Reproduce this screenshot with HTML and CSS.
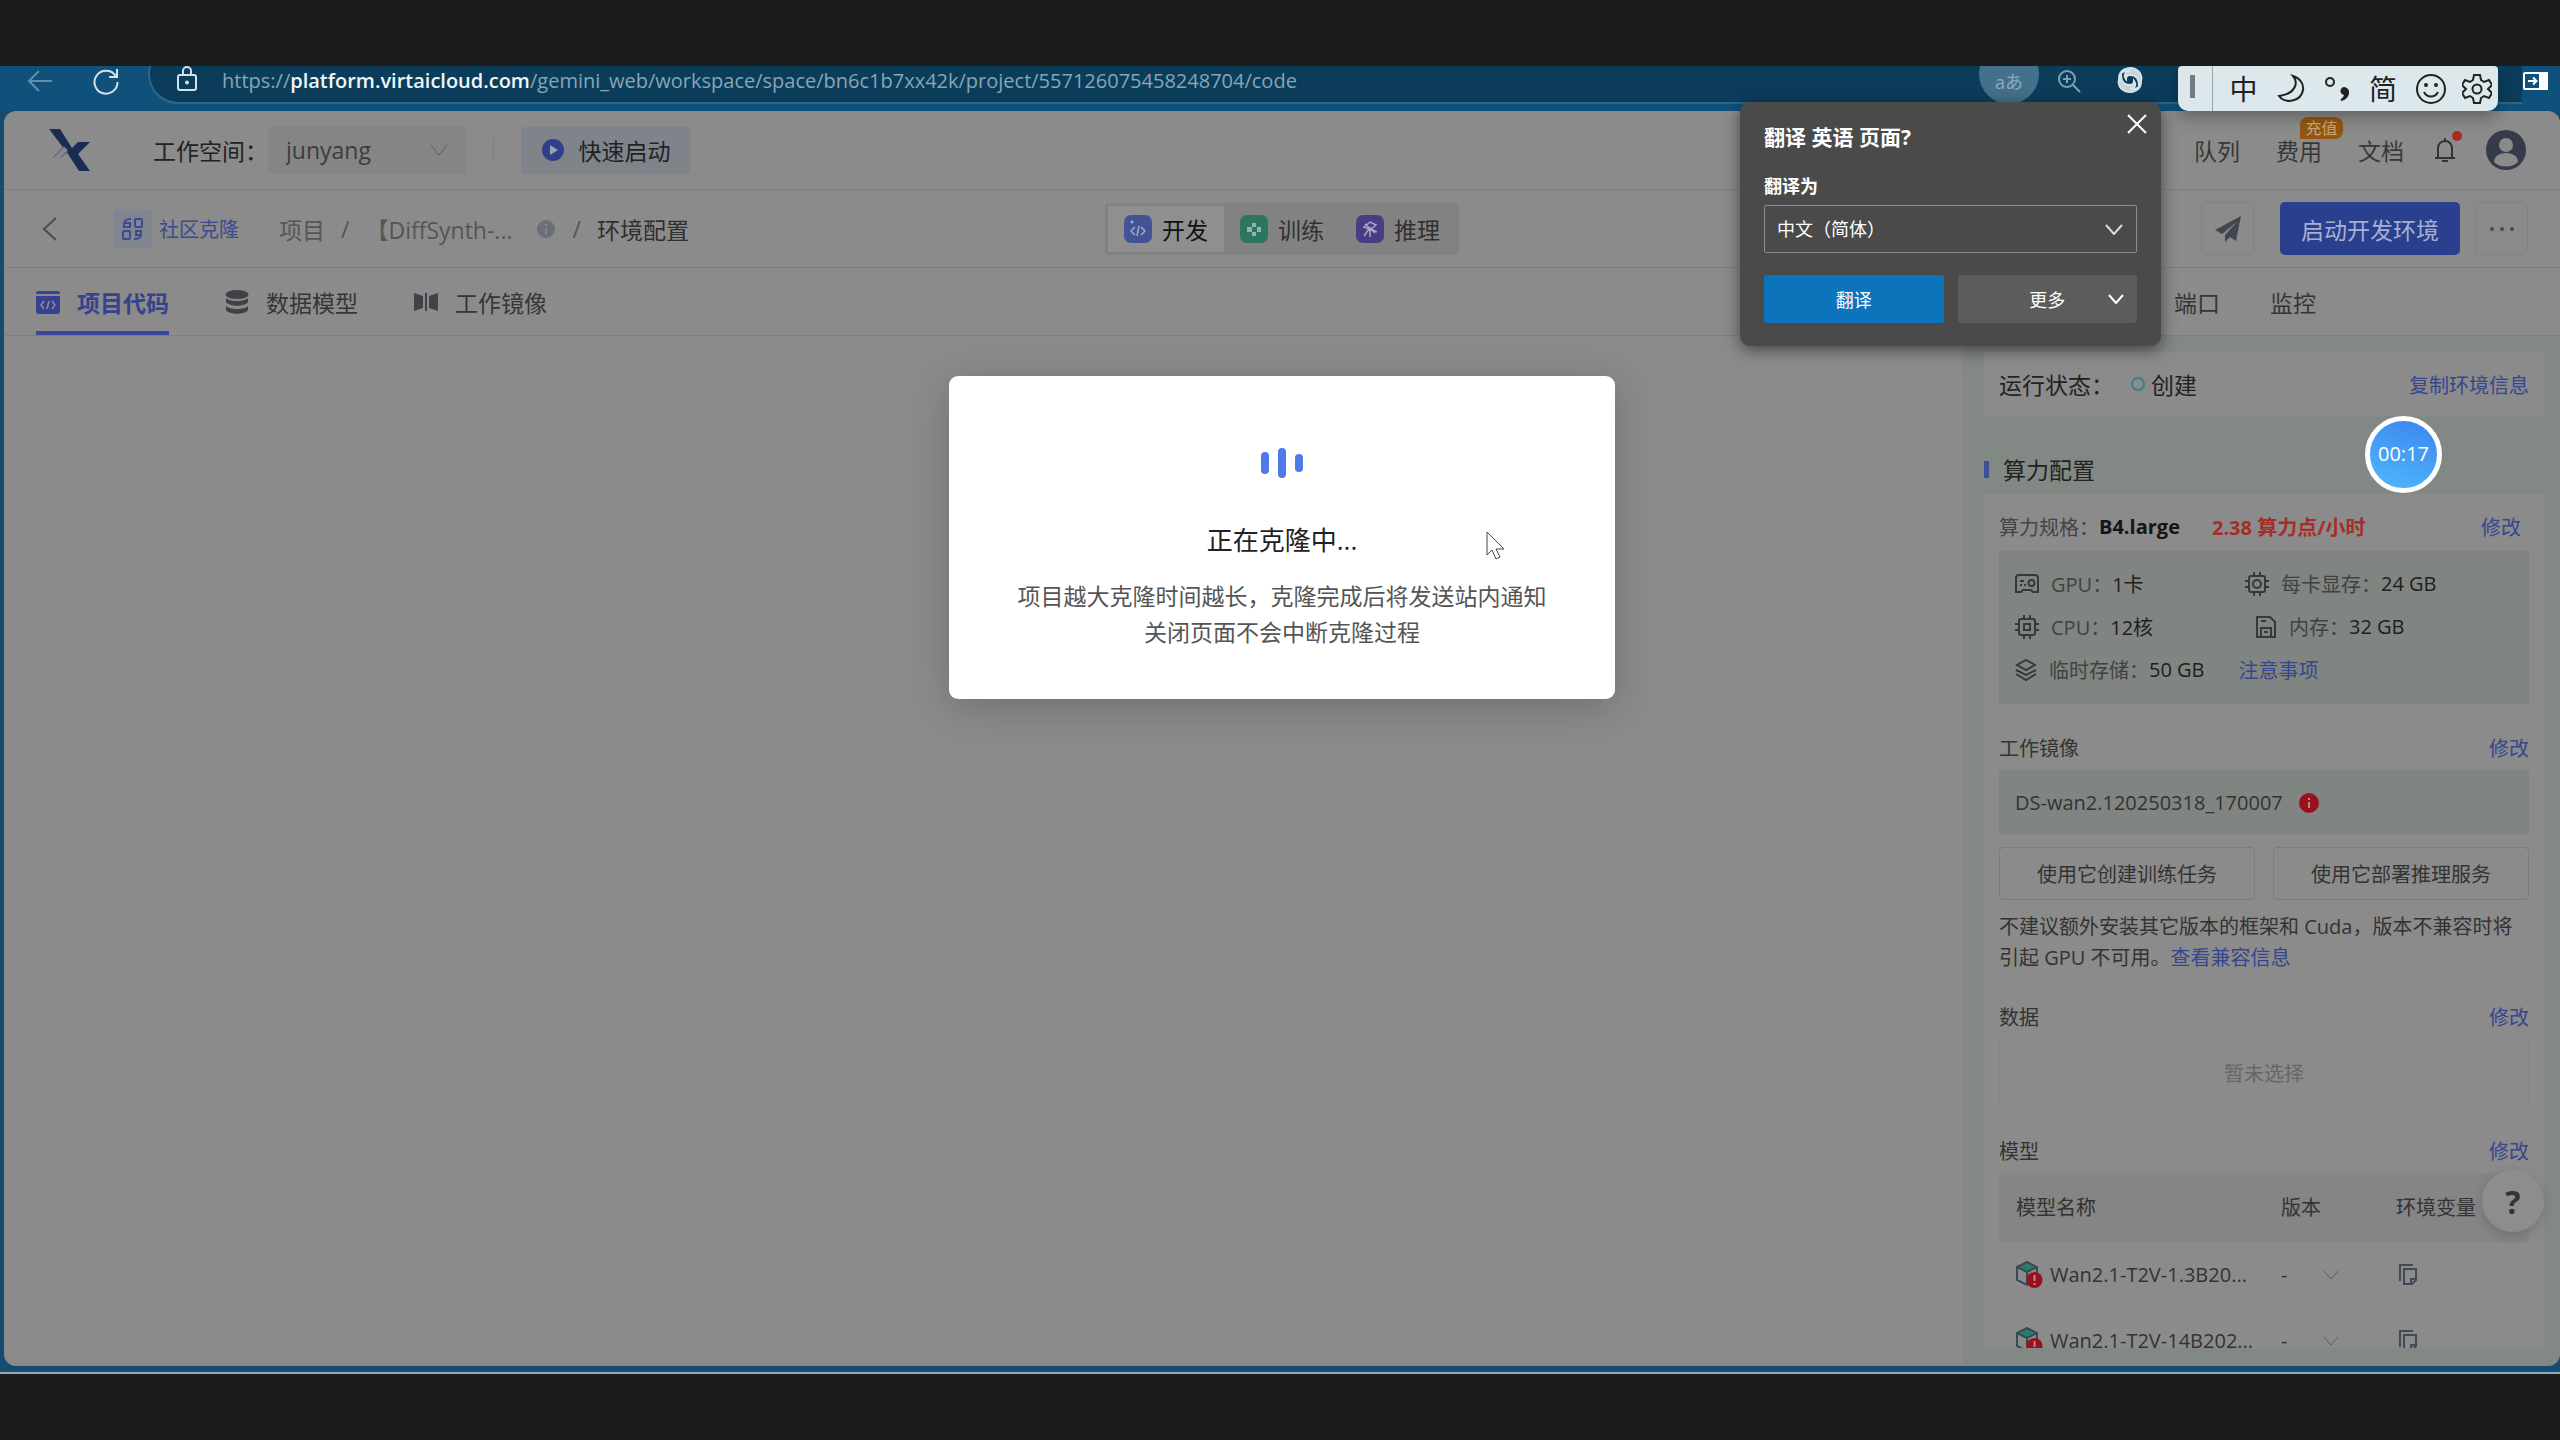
FILE: index.html
```html
<!DOCTYPE html>
<html lang="zh">
<head>
    <meta charset="UTF-8">
    <meta name="viewport" content="width=device-width, initial-scale=1.0">
    <title>环境配置</title>
    <link rel="stylesheet" href="styles.css">
</head>
<body>
    <!-- 浏览器地址栏 -->
    <div class="browser-bar">
        <button class="bar-button back" aria-label="后退">
            <svg width="28" height="28" viewBox="0 0 28 28"><path d="M26 14H3M13 4L3 14l10 10"/></svg>
        </button>
        <button class="bar-button" aria-label="刷新">
            <svg width="28" height="28" viewBox="0 0 28 28"><path d="M24 9.500A11.500 11.500 0 1 0 25.500 15M25 2v8h-8"/></svg>
        </button>
        <div class="address">
            <svg width="22" height="26" viewBox="0 0 22 26"><rect x="2" y="9" width="18" height="15" rx="2"/><path d="M7 9V5a4 4 0 0 1 8 0v4"/><circle cx="11" cy="16.500" r="1"/></svg>
            <div class="url">https://<b>platform.virtaicloud.com</b>/gemini_web/workspace/space/bn6c1b7xx42k/project/557126075458248704/code</div>
            <button class="translate-icon" aria-label="翻译此页">aあ</button>
            <button class="bar-button zoom" aria-label="缩放">
                <svg width="24" height="24" viewBox="0 0 24 24"><circle cx="10" cy="10" r="8"/><path d="M16 16l7 7M6 10h8M10 6v8"/></svg>
            </button>
            <svg class="swirl" width="28" height="28" viewBox="0 0 28 28">
                <path d="M3 12C3 4 12 0 19 3c7 3 8 11 4 16 0-6-3-10-9-10-3 0-4 2-4 4-3-4 0-8 4-8-6-1-10 2-11 7z" fill="#c3d6df"/>
                <path d="M25 16c0 8-9 12-16 9-7-3-8-11-4-16 0 6 3 10 9 10 3 0 4-2 4-4 3 4 0 8-4 8 6 1 10-2 11-7z" fill="#c3d6df"/>
            </svg>
        </div>
        <button class="bar-button side" aria-label="侧边栏">
            <svg width="26" height="20" viewBox="0 0 26 20"><rect x="1" y="2" width="23" height="16" rx="1"/><path d="M17 2h7v16h-7z" fill="#fff"/><path d="M5 10h8M10 6.500l3.500 3.500-3.500 3.500"/></svg>
        </button>
    </div>

    <div class="page">
        <!-- 顶部导航 -->
        <div class="header">
            <svg class="logo" width="44" height="44" viewBox="0 0 44 44">
                <path d="M1 1h11l12 19 6-6h12L30 26l12 17H31L20 26z" fill="#1a2c52"/>
                <path d="M4 30l12-12 4 6-7 6z" fill="#5f6879"/>
                <path d="M6 31l11-11M9 31l10-10" stroke="#8b8b8b"/>
            </svg>
            <label class="space-label" for="space">工作空间：</label>
            <div class="select-wrap space-select">
                <select id="space"><option>junyang</option></select>
                <svg width="18" height="12" viewBox="0 0 18 12"><path d="M1 1l8 10 8-10"/></svg>
            </div>
            <div class="divider"></div>
            <button class="quick-start">
                <svg width="24" height="24" viewBox="0 0 24 24"><circle cx="12" cy="12" r="11" fill="#313f88"/><path d="M9 7l8 5-8 5z" fill="#98a0b5"/></svg>
                快速启动
            </button>
            <div class="header-links">
                <a href="#">队列</a>
                <a href="#" class="cost">费用<span class="badge">充值</span></a>
                <a href="#">文档</a>
                <button class="bell" aria-label="通知">
                    <svg width="22" height="26" viewBox="0 0 22 26"><path d="M1 21h20M4 21V11a7 7 0 0 1 14 0v10M11 4V1M8 24h6"/></svg>
                    <span class="red-dot"></span>
                </button>
                <button class="avatar" aria-label="用户">
                    <svg width="40" height="40" viewBox="0 0 40 40"><circle cx="20" cy="20" r="20" fill="#363b4a"/><circle cx="20" cy="15" r="7" fill="#8b8b8b"/><path d="M8 32c0-12 24-12 24 0-6 6-18 6-24 0z" fill="#8b8b8b"/></svg>
                </button>
            </div>
        </div>

        <!-- 面包屑和操作 -->
        <div class="sub-header">
            <button class="back-button" aria-label="返回">
                <svg width="16" height="24" viewBox="0 0 16 24"><path d="M14 1L2 12l12 11"/></svg>
            </button>
            <span class="clone-icon">
                <svg width="24" height="24" viewBox="0 0 24 24"><rect x="14" y="2" width="7" height="8" rx="1"/><rect x="2" y="14" width="7" height="8" rx="1"/><path d="M10 2C5 2 3 4 3 7v3h6V6H4M13 22c5 0 7-2 7-5v-3h-5v4h5"/></svg>
            </span>
            <span class="clone-text">社区克隆</span>
            <div class="breadcrumb">
                <a href="#">项目</a>
                <span>/</span>
                <a href="#">【DiffSynth-...</a>
                <svg width="20" height="20" viewBox="0 0 20 20"><circle cx="10" cy="10" r="9" fill="#6b6f77"/><path d="M10 5v2M10 9v6" stroke="#858585" stroke-width="2"/></svg>
                <span>/</span>
                <span class="current">环境配置</span>
            </div>
            <div class="modes">
                <button class="mode active">
                    <svg width="28" height="28" viewBox="0 0 28 28"><rect width="28" height="28" rx="7" fill="#445395"/><path d="M11 12l-4 4 4 4M17 12l4 4-4 4M15 11l-2 10" fill="none" stroke="#a2abc9" stroke-width="1.500"/><circle cx="8" cy="7" r="1.500" fill="#a2abc9"/></svg>
                    开发
                </button>
                <button class="mode">
                    <svg width="28" height="28" viewBox="0 0 28 28"><rect width="28" height="28" rx="7" fill="#2b7561"/><path d="M12 8h4v4h-4zM12 17h4v4h-4zM7 12h5v5H7zM17 12h4v5h-4z" fill="#94b3a9"/></svg>
                    训练
                </button>
                <button class="mode">
                    <svg width="28" height="28" viewBox="0 0 28 28"><rect width="28" height="28" rx="7" fill="#493c86"/><path d="M14 7l-6 5 5 2-5 7M14 7l6 3-5 4 6 3M14 12v10M9 9l10 9" fill="none" stroke="#aaa4c6" stroke-width="1.500"/></svg>
                    推理
                </button>
            </div>
            <div class="actions">
                <button class="icon-button" aria-label="分享">
                    <svg width="30" height="30" viewBox="0 0 30 30"><path d="M28 2L2 16l7 4L24 8 12 21v7l5-5 6 4z" fill="#42464f"/></svg>
                </button>
                <button class="primary-button">启动开发环境</button>
                <button class="icon-button" aria-label="更多操作">
                    <svg width="26" height="6" viewBox="0 0 26 6"><g fill="#4a4a4a"><circle cx="3" cy="3" r="2"/><circle cx="13" cy="3" r="2"/><circle cx="23" cy="3" r="2"/></g></svg>
                </button>
            </div>
        </div>

        <!-- 标签栏 -->
        <div class="tabs">
            <button class="tab active">
                <svg width="24" height="24" viewBox="0 0 24 24"><path d="M0 4a3 3 0 0 1 3-3h18a3 3 0 0 1 3 3zM0 6h24v15a3 3 0 0 1-3 3H3a3 3 0 0 1-3-3z" fill="#34428f"/><path d="M8 11l-3 4 3 4M16 11l3 4-3 4M13 11l-2 8" fill="none" stroke="#8b8b9b" stroke-width="1.500"/></svg>
                项目代码
            </button>
            <button class="tab">
                <svg width="24" height="24" viewBox="0 0 24 24"><g fill="#3f4247"><ellipse cx="12" cy="4.500" rx="11.500" ry="4.500"/><path d="M1 8c3 4 19 4 22 0v4c-3 5-19 5-22 0zM1 16c3 4 19 4 22 0v4c-3 5-19 5-22 0z"/></g></svg>
                数据模型
            </button>
            <button class="tab">
                <svg width="24" height="24" viewBox="0 0 24 24"><path d="M0 3l9 3v12l-9 3zM11 3h2v18h-2zM24 3l-9 3v12l9 3z" fill="#3f4247"/></svg>
                工作镜像
            </button>
            <div class="side-tabs">
                <button class="tab">端口</button>
                <button class="tab">监控</button>
            </div>
        </div>

        <div class="content">
            <div class="workspace"></div>
            <div class="sidebar">
                <div class="card status">
                    <span>运行状态：</span>
                    <span class="state-dot"></span>
                    <span>创建</span>
                    <a href="#" class="link">复制环境信息</a>
                </div>
                <div class="side-title">算力配置</div>
                <div class="card config">
                    <div class="spec-row">
                        <span>算力规格：</span>
                        <b>B4.large</b>
                        <b class="price">2.38 算力点/小时</b>
                        <a href="#" class="link">修改</a>
                    </div>
                    <div class="spec-box">
                        <div class="spec-line">
                            <div class="spec wide">
                                <svg width="24" height="22" viewBox="0 0 24 22"><path d="M4 2h16a3 3 0 0 1 3 3v14h-5l-2-2H8l-2 2H1V5a3 3 0 0 1 3-3zM5 8h4M5 12h2M9 12h2"/><circle cx="16.500" cy="10" r="3"/></svg>
                                <span>GPU：</span><em>1卡</em>
                            </div>
                            <div class="spec">
                                <svg width="24" height="24" viewBox="0 0 24 24"><rect x="4" y="4" width="16" height="16" rx="2"/><circle cx="12" cy="12" r="4"/><path d="M9 0v4M15 0v4M9 20v4M15 20v4M0 9h4M0 15h4M20 9h4M20 15h4"/></svg>
                                <span>每卡显存：</span><em>24 GB</em>
                            </div>
                        </div>
                        <div class="spec-line">
                            <div class="spec wide cpu">
                                <svg width="24" height="24" viewBox="0 0 24 24"><rect x="4" y="4" width="16" height="16" rx="2"/><rect x="9" y="9" width="6" height="6"/><path d="M9 0v4M15 0v4M9 20v4M15 20v4M0 9h4M0 15h4M20 9h4M20 15h4"/></svg>
                                <span>CPU：</span><em>12核</em>
                            </div>
                            <div class="spec">
                                <svg width="22" height="22" viewBox="0 0 22 22"><path d="M2 1h13l5 5v15H2zM6 21v-9h10v9M6 5h5M9 16h4"/></svg>
                                <span>内存：</span><em>32 GB</em>
                            </div>
                        </div>
                        <div class="spec-line">
                            <div class="spec">
                                <svg width="22" height="22" viewBox="0 0 22 22"><path d="M11 1l9 5-9 5-9-5zM1 11l10 5 10-5M1 15l10 6 10-6"/></svg>
                                <span>临时存储：</span><em>50 GB</em>
                            </div>
                            <a href="#" class="link">注意事项</a>
                        </div>
                    </div>

                    <div class="section-title"><span>工作镜像</span><a href="#" class="link">修改</a></div>
                    <div class="image-box">
                        DS-wan2.120250318_170007
                        <svg width="20" height="20" viewBox="0 0 20 20"><circle cx="10" cy="10" r="10" fill="#99111f"/><path d="M10 5v2M10 9v6" stroke="#b9868b" stroke-width="2"/></svg>
                    </div>
                    <div class="image-buttons">
                        <button>使用它创建训练任务</button>
                        <button>使用它部署推理服务</button>
                    </div>
                    <div class="note">不建议额外安装其它版本的框架和 Cuda，版本不兼容时将引起 GPU 不可用。<a href="#" class="link">查看兼容信息</a></div>

                    <div class="section-title"><span>数据</span><a href="#" class="link">修改</a></div>
                    <div class="empty">暂未选择</div>

                    <div class="section-title"><span>模型</span><a href="#" class="link">修改</a></div>
                    <table class="models">
                        <thead>
                            <tr><th class="col-name">模型名称</th><th class="col-version">版本</th><th>环境变量</th></tr>
                        </thead>
                        <tbody>
                            <tr>
                                <td>
                                    <div class="model-name">
                                        <svg width="27" height="28" viewBox="0 0 27 28"><path d="M1 6l10-5 10 5-10 5z" fill="#2f7a66"/><path d="M1 6l10-5 10 5v13l-10 5-10-5zM1 6l10 5v13M11 11l10-5" fill="none" stroke="#344a56"/><circle cx="18.500" cy="19" r="8" fill="#99111f"/><path d="M18.500 14v6M18.500 22v2" stroke="#b9868b" stroke-width="2"/></svg>
                                        Wan2.1-T2V-1.3B20...
                                    </div>
                                </td>
                                <td>
                                    <div class="select-wrap version">
                                        <select aria-label="版本"><option>-</option></select>
                                        <svg width="16" height="10" viewBox="0 0 16 10"><path d="M1 1l7 8 7-8"/></svg>
                                    </div>
                                </td>
                                <td>
                                    <button class="copy" aria-label="复制">
                                        <svg width="20" height="22" viewBox="0 0 20 22"><path d="M5 5h12v11l-4 4H5zM17 15h-5v5M1 17V1h13"/></svg>
                                    </button>
                                </td>
                            </tr>
                            <tr>
                                <td>
                                    <div class="model-name">
                                        <svg width="27" height="28" viewBox="0 0 27 28"><path d="M1 6l10-5 10 5-10 5z" fill="#2f7a66"/><path d="M1 6l10-5 10 5v13l-10 5-10-5zM1 6l10 5v13M11 11l10-5" fill="none" stroke="#344a56"/><circle cx="18.500" cy="19" r="8" fill="#99111f"/><path d="M18.500 14v6M18.500 22v2" stroke="#b9868b" stroke-width="2"/></svg>
                                        Wan2.1-T2V-14B202...
                                    </div>
                                </td>
                                <td>
                                    <div class="select-wrap version">
                                        <select aria-label="版本"><option>-</option></select>
                                        <svg width="16" height="10" viewBox="0 0 16 10"><path d="M1 1l7 8 7-8"/></svg>
                                    </div>
                                </td>
                                <td>
                                    <button class="copy" aria-label="复制">
                                        <svg width="20" height="22" viewBox="0 0 20 22"><path d="M5 5h12v11l-4 4H5zM17 15h-5v5M1 17V1h13"/></svg>
                                    </button>
                                </td>
                            </tr>
                        </tbody>
                    </table>
                </div>
            </div>
        </div>

        <!-- 克隆进度弹窗 -->
        <div class="modal">
            <svg width="42" height="30" viewBox="0 0 42 30"><g fill="#4f78e8"><rect y="4" width="8" height="22" rx="4"/><rect x="17" width="8" height="30" rx="4"/><rect x="34" y="6" width="8" height="18" rx="4"/></g></svg>
            <h3>正在克隆中...</h3>
            <p>项目越大克隆时间越长，克隆完成后将发送站内通知<br>关闭页面不会中断克隆过程</p>
        </div>

        <button class="help" aria-label="帮助">?</button>
        <div class="timer">00:17</div>
        <svg class="cursor" width="20" height="30" viewBox="0 0 20 30"><path d="M1 1v23l5-5 4 9 4-2-4-8h8z" fill="#fff" stroke="#444" stroke-width="1"/></svg>
    </div>

    <!-- 翻译提示 -->
    <div class="translate">
        <button class="close" aria-label="关闭">
            <svg width="20" height="20" viewBox="0 0 20 20"><path d="M1 1l18 18M19 1L1 19"/></svg>
        </button>
        <div class="translate-title">翻译 英语 页面?</div>
        <label for="lang">翻译为</label>
        <div class="select-wrap lang">
            <select id="lang"><option>中文（简体）</option></select>
            <svg width="18" height="11" viewBox="0 0 18 11"><path d="M1 1l8 9 8-9"/></svg>
        </div>
        <div class="translate-buttons">
            <button class="do-translate">翻译</button>
            <button class="more">更多
                <svg width="16" height="10" viewBox="0 0 16 10"><path d="M1 1l7 8 7-8"/></svg>
            </button>
        </div>
    </div>

    <!-- 输入法工具条 -->
    <div class="ime">
        <span class="handle"></span>
        <span class="ime-item">中</span>
        <svg class="ime-item" width="30" height="30" viewBox="0 0 30 30"><path d="M17 2c6 7 2 18-14 20 6 8 22 6 24-6 1-6-3-12-10-14z"/></svg>
        <svg class="ime-item" width="30" height="30" viewBox="0 0 30 30"><circle cx="7" cy="8" r="4"/><path d="M21 14a3 3 0 1 0 1 6c0 3-2 5-4 6 5-1 8-5 7-9-1-2-2-3-4-3z" fill="#222"/></svg>
        <span class="ime-item">简</span>
        <svg class="ime-item" width="30" height="30" viewBox="0 0 30 30"><circle cx="15" cy="15" r="14"/><path d="M8 18c3 6 11 6 14 0"/><circle cx="10" cy="11" r="1" fill="#222"/><circle cx="20" cy="11" r="1" fill="#222"/></svg>
        <svg class="ime-item" width="30" height="30" viewBox="0 0 30 30"><path d="M12 1h6l1 5 3 2 5-2 3 5-4 4 4 4-3 5-5-2-3 2-1 5h-6l-1-5-3-2-5 2-3-5 4-4-4-4 3-5 5 2 3-2z"/><circle cx="15" cy="15" r="4.500"/></svg>
    </div>
</body>
</html>
```

FILE: styles.css
```css
* {
    box-sizing: border-box;
}

body {
    font-family: "Open Sans", "Noto Sans CJK SC", sans-serif;
    font-size: 20px;
    margin: 0;
    padding: 66px 0;
    height: 100vh;
    background-color: #1a1d1c;
    color: #333;
    display: flex;
    flex-direction: column;
    position: relative;
    overflow: hidden;
}

button, select {
    font: inherit;
    color: inherit;
    background: none;
    border: none;
    padding: 0;
    margin: 0;
    cursor: pointer;
}

a {
    color: inherit;
    text-decoration: none;
}

svg {
    flex: none;
    fill: none;
    stroke-width: 2;
}

.link {
    color: #36468f;
}

/* 地址栏 */
.browser-bar {
    height: 45px;
    flex: none;
    display: flex;
    padding-left: 26px;
    padding-right: 10px;
    background-color: #10517b;
    overflow: hidden;
}

.bar-button {
    height: 30px;
    width: 28px;
    margin-right: 38px;
    stroke: #d3e2eb;
    display: flex;
    align-items: center;
    justify-content: center;
}

    .bar-button.back {
        stroke: #5f8fae;
    }

    .bar-button.zoom {
        stroke: #7fa0b3;
        margin: 0 33px 0 16px;
    }

    .bar-button.side {
        stroke: #fff;
        margin: 0;
    }

.address {
    flex: 1;
    height: 60px;
    margin-top: -22px;
    margin-left: -10px;
    padding: 20px 0 0 26px;
    display: flex;
    background-color: #0b3d5b;
    border: 2px solid #2c6788;
    border-right: none;
    border-radius: 30px 0 0 30px;
    stroke: #d3e2eb;
}

.url {
    flex: 1;
    margin-left: 24px;
    font-size: 20px;
    line-height: 30px;
    color: #86a5b8;
    white-space: nowrap;
}

    .url b {
        font-weight: 600;
        color: #eef5f9;
    }

.translate-icon {
    width: 60px;
    height: 60px;
    margin-top: -22px;
    padding-top: 14px;
    border-radius: 50%;
    background-color: #44708c;
    color: #8cabbd;
    font-size: 18px;
}

.swirl {
    margin-right: 378px;
}

/* 页面 */
.page {
    flex: 1;
    min-height: 0;
    margin-left: 4px;
    display: flex;
    flex-direction: column;
    position: relative;
    background-color: #8b8b8b;
    border-radius: 12px;
    box-shadow: 0 0 0 30px #174c70;
    clip-path: inset(0 0 -8px -4px);
    border-bottom: 1px solid #72899a;
}

body::after {
    content: "";
    height: 2px;
    margin-top: 6px;
    background-color: #8fa9bb;
    z-index: 2;
}

.header, .sub-header, .tabs {
    flex: none;
    display: flex;
    align-items: center;
    border-bottom: 1px solid #7f7f7f;
    font-size: 23px;
}

.header {
    height: 79px;
    padding: 0 34px 0 44px;
    color: #222;
}

.space-label {
    margin-left: 61px;
}

.select-wrap {
    position: relative;
    display: flex;
    align-items: center;
    stroke: #5f5f5f;
}

    .select-wrap select {
        appearance: none;
        width: 100%;
        height: 100%;
    }

    .select-wrap svg {
        position: absolute;
        right: 18px;
        stroke-width: 1;
        pointer-events: none;
    }

.space-select {
    width: 198px;
    height: 48px;
    background-color: #858585;
    border-radius: 4px;
    color: #3c3c3c;
}

    .space-select select {
        padding-left: 18px;
    }

.divider {
    width: 1px;
    height: 24px;
    margin: 0 27px;
    background-color: #808080;
}

.quick-start {
    width: 169px;
    height: 47px;
    display: flex;
    align-items: center;
    justify-content: center;
    gap: 14px;
    background-color: #7f848b;
    border-radius: 4px;
}

.header-links {
    margin-left: auto;
    display: flex;
    align-items: center;
    gap: 36px;
    color: #383838;
}

.cost {
    position: relative;
}

.badge {
    position: absolute;
    left: 24px;
    top: -16px;
    width: 43px;
    height: 22px;
    line-height: 22px;
    text-align: center;
    font-size: 16px;
    color: #c9a77c;
    background-color: #935711;
    border-radius: 8px 8px 8px 0;
}

.bell {
    position: relative;
    display: flex;
    margin-left: -6px;
    stroke: #333;
}

.red-dot {
    position: absolute;
    right: -6px;
    top: -6px;
    width: 10px;
    height: 10px;
    border-radius: 50%;
    background-color: #a92b20;
}

.avatar {
    display: flex;
    margin-left: -6px;
}

/* 面包屑 */
.sub-header {
    height: 78px;
    padding: 0 32px 0 38px;
    position: relative;
}

.back-button {
    display: flex;
    stroke: #4d4d4d;
}

.clone-icon {
    width: 39px;
    height: 39px;
    margin-left: 55px;
    display: flex;
    align-items: center;
    justify-content: center;
    background-color: #80858f;
    border-radius: 4px;
    stroke: #3c4a92;
}

.clone-text {
    margin-left: 7px;
    font-size: 20px;
    color: #3c4a92;
}

.breadcrumb {
    margin-left: 40px;
    display: flex;
    align-items: center;
    gap: 16px;
    color: #555;
}

    .breadcrumb svg {
        margin-left: 8px;
    }

    .breadcrumb .current {
        color: #303030;
    }

/* 模式切换浮在行中间 */
.modes {
    position: absolute;
    left: 50%;
    transform: translateX(-50%);
    display: flex;
    padding: 3px;
    background-color: #828282;
    border-radius: 4px;
}

.mode {
    width: 116px;
    height: 46px;
    display: flex;
    align-items: center;
    justify-content: center;
    gap: 10px;
    color: #303030;
}

    .mode.active {
        background-color: #8f8f8f;
        color: #111;
    }

.actions {
    margin-left: auto;
    display: flex;
    align-items: center;
}

.icon-button {
    width: 53px;
    height: 53px;
    display: flex;
    align-items: center;
    justify-content: center;
    border: 1px solid #828282;
    border-radius: 6px;
}

.primary-button {
    width: 180px;
    height: 53px;
    margin: 0 15px 0 26px;
    background-color: #2b3f8f;
    border-radius: 5px;
    color: #a6afd0;
}

/* 标签 */
.tabs {
    height: 68px;
    padding: 0 244px 0 32px;
    gap: 56px;
}

.tab {
    height: 67px;
    display: flex;
    align-items: center;
    gap: 17px;
    color: #363636;
}

    .tab.active {
        color: #34428f;
        font-weight: bold;
        border-bottom: 4px solid #3b479a;
        border-top: 4px solid transparent;
    }

.side-tabs {
    margin-left: auto;
    display: flex;
    gap: 50px;
}

.content {
    flex: 1;
    min-height: 0;
    display: flex;
}

.workspace {
    flex: 1;
}

/* 右侧栏 */
.sidebar {
    width: 597px;
    padding: 16px 16px 17px 19px;
    display: flex;
    flex-direction: column;
    background-color: #828884;
    border-left: 2px solid #868686;
    border-radius: 0 0 12px 0;
}

.card {
    background-color: #8b8b8b;
    padding: 0 15px;
}

.status {
    height: 64px;
    flex: none;
    display: flex;
    align-items: center;
    font-size: 23px;
    color: #222;
}

    .status .link {
        margin-left: auto;
        font-size: 20px;
    }

.state-dot {
    width: 14px;
    height: 14px;
    margin: 0 6px 0 17px;
    border: 2px solid #3b7f83;
    border-radius: 50%;
}

.side-title {
    height: 78px;
    flex: none;
    padding-top: 28px;
    display: flex;
    align-items: center;
    gap: 14px;
    font-size: 23px;
    color: #222;
}

    .side-title::before {
        content: "";
        width: 5px;
        height: 17px;
        background-color: #3e4f9c;
    }

.config {
    flex: 1;
    min-height: 0;
    overflow: hidden;
}

.spec-row {
    height: 57px;
    padding: 8px 8px 0 0;
    display: flex;
    align-items: center;
    color: #444;
}

    .spec-row b {
        color: #151515;
    }

    .spec-row .price {
        margin-left: 32px;
        color: #a32e2a;
    }

    .spec-row .link {
        margin-left: auto;
    }

.spec-box {
    height: 153px;
    padding: 11px 16px;
    background-color: #808582;
    color: #3e4341;
}

.spec-line {
    height: 43px;
    display: flex;
    align-items: center;
    stroke: #343a37;
}

    .spec-line .link {
        margin-left: 34px;
    }

.spec {
    display: flex;
    align-items: center;
    gap: 12px;
}

    .spec em {
        font-style: normal;
        color: #1d201f;
        margin-left: -12px;
    }

    .spec.wide {
        width: 230px;
    }

    .spec.cpu {
        width: 240px;
    }

.section-title {
    height: 66px;
    padding-top: 20px;
    display: flex;
    align-items: center;
    justify-content: space-between;
}

.image-box {
    height: 65px;
    padding-left: 16px;
    display: flex;
    align-items: center;
    gap: 16px;
    background-color: #808582;
}

.image-buttons {
    margin-top: 12px;
    display: flex;
    gap: 18px;
}

    .image-buttons button {
        flex: 1;
        height: 53px;
        border: 1px solid #7c7c7c;
        border-radius: 4px;
    }

.note {
    margin-top: 11px;
    line-height: 31px;
}

.empty {
    height: 68px;
    line-height: 68px;
    text-align: center;
    color: #666;
    border: 1px solid #868686;
}

.models {
    width: 100%;
    table-layout: fixed;
    border-collapse: collapse;
    line-height: 28px;
}

    .models th {
        height: 69px;
        padding: 0 0 0 17px;
        text-align: left;
        font-weight: normal;
        background-color: #858585;
    }

    .models td {
        height: 66px;
        padding: 0 0 0 17px;
        border-bottom: 1px solid #868686;
    }

.col-name {
    width: 265px;
}

.col-version {
    width: 115px;
}

.model-name {
    display: flex;
    align-items: center;
    gap: 7px;
    white-space: nowrap;
}

.version {
    width: 60px;
}

    .version svg {
        right: 2px;
    }

.copy {
    display: flex;
    margin-left: 3px;
    stroke: #444a55;
}

/* 弹窗 */
.modal {
    position: absolute;
    left: 50%;
    top: 265px;
    transform: translateX(-50%);
    width: 666px;
    padding: 72px 40px 49px;
    text-align: center;
    background-color: #fff;
    border-radius: 9px;
    box-shadow: 0 8px 40px rgba(0,0,0,0.2);
}

    .modal svg {
        display: block;
        margin: 0 auto;
    }

    .modal h3 {
        margin: 42px 0 18px;
        font-size: 26px;
        font-weight: normal;
        line-height: 40px;
        color: #222;
    }

    .modal p {
        margin: 0;
        font-size: 23px;
        line-height: 36px;
        color: #555;
    }

.help {
    position: absolute;
    right: 16px;
    bottom: 133px;
    width: 62px;
    height: 62px;
    border-radius: 50%;
    background-color: #8d8d8d;
    box-shadow: 0 4px 12px rgba(0,0,0,0.15);
    font-size: 32px;
    font-weight: bold;
}

.timer {
    position: absolute;
    right: 118px;
    top: 305px;
    width: 77px;
    height: 77px;
    line-height: 66px;
    text-align: center;
    color: #fff;
    border: 5px solid #fff;
    border-radius: 50%;
    background: linear-gradient(200deg, #3d85ef, #4fb8fb);
}

.cursor {
    position: absolute;
    left: 58%;
    top: 420px;
}

/* 翻译弹窗 */
.translate {
    position: absolute;
    right: 399px;
    top: 102px;
    width: 421px;
    height: 244px;
    padding: 18px 24px;
    color: #fff;
    background-color: #4a4a4a;
    border-radius: 10px;
    box-shadow: 0 4px 16px rgba(0,0,0,0.5);
    font-size: 18px;
    stroke: #fff;
}

.close {
    position: absolute;
    right: 14px;
    top: 12px;
    display: flex;
    stroke-width: 1;
}

.translate-title {
    font-size: 21px;
    font-weight: bold;
    line-height: 34px;
}

.translate label {
    display: block;
    margin-top: 18px;
    line-height: 28px;
    font-weight: bold;
}

.lang {
    height: 48px;
    margin-top: 5px;
    border: 1px solid #8c8c8c;
    border-radius: 2px;
    stroke: #ddd;
}

    .lang select {
        padding-left: 12px;
    }

    .lang svg {
        right: 13px;
        stroke-width: 2;
    }

.translate-buttons {
    margin-top: 22px;
    display: flex;
    gap: 14px;
}

    .translate-buttons button {
        flex: 1 1 0;
        height: 48px;
        border-radius: 3px;
        background-color: #5c5c5c;
    }

    .translate-buttons .do-translate {
        background-color: #0b74bb;
    }

.more {
    position: relative;
}

    .more svg {
        position: absolute;
        right: 13px;
        top: 19px;
    }

/* 输入法 */
.ime {
    position: absolute;
    right: 62px;
    top: 66px;
    width: 320px;
    height: 45px;
    display: flex;
    align-items: center;
    justify-content: space-between;
    padding-right: 6px;
    background-color: #dde8ed;
    border-radius: 4px 4px 10px 10px;
    box-shadow: 0 6px 16px rgba(0,0,0,0.3);
    color: #222;
    stroke: #222;
}

.handle {
    width: 35px;
    height: 100%;
    padding: 9px 17px 13px 12px;
    border-right: 1px solid #9aa5aa;
    background-color: #737b80;
    background-clip: content-box;
}

.ime-item {
    width: 30px;
    font-size: 28px;
    line-height: 30px;
}
```
